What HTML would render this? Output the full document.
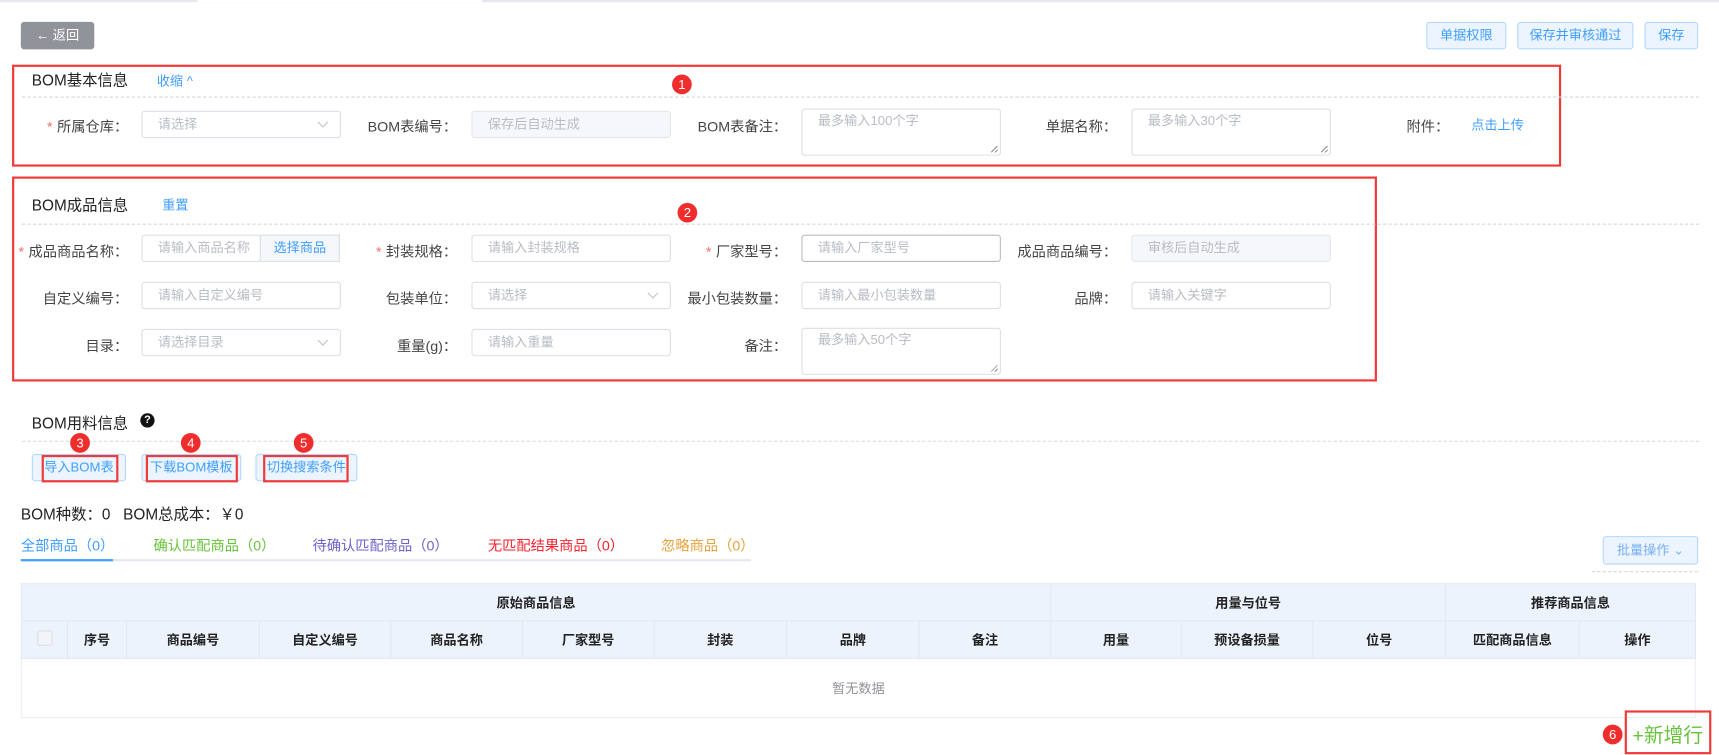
<!DOCTYPE html>
<html><head><meta charset="utf-8">
<style>
html,body{margin:0;padding:0;width:1719px;height:755px;overflow:hidden;background:#fff;}
#w{position:absolute;left:0;top:0;width:1568px;height:689px;transform:scale(1.0963);transform-origin:0 0;font-family:"Liberation Sans","Noto Sans CJK SC",sans-serif;color:#303133;}
.a{position:absolute;}
.btn{position:absolute;box-sizing:border-box;border:1px solid #b3d8ff;background:#ecf5ff;color:#409eff;font-size:12px;border-radius:3px;text-align:center;}
.red{position:absolute;border:2px solid #f03a3a;box-sizing:border-box;}
.dot{position:absolute;width:18px;height:18px;border-radius:50%;background:#f02d2d;color:#fff;font-size:12px;text-align:center;line-height:18px;}
.title{position:absolute;font-size:14px;color:#222;}
.dash{position:absolute;height:0;border-top:1px dashed #d4d7dd;}
.lbl{position:absolute;font-size:13px;color:#444;text-align:right;width:110px;}
.lbl i{color:#f56c6c;font-style:normal;margin-right:4px;}
.in{position:absolute;box-sizing:border-box;border:1px solid #dcdfe6;border-radius:3px;height:25px;width:182px;font-size:12px;color:#b8bcc4;padding-left:14px;line-height:23px;background:#fff;}
.dis{background:#f5f7fa;border-color:#e4e7ed;}
.ta{height:43px;line-height:20px;}
.sel:after{content:"";position:absolute;right:12px;top:6px;width:6px;height:6px;border-right:1px solid #c0c4cc;border-bottom:1px solid #c0c4cc;transform:rotate(45deg);}
.ta:after{content:"";position:absolute;right:2px;bottom:2px;width:6px;height:6px;background:linear-gradient(135deg,transparent 45%,#888 45%,#888 55%,transparent 55%,transparent 75%,#888 75%,#888 85%,transparent 85%);}
table{border-collapse:collapse;position:absolute;left:19px;top:532px;width:1527px;font-size:12px;table-layout:fixed;}
th{background:#ecf3fd;border:1px solid #e2e8f0;font-weight:bold;color:#222;height:33px;padding:0;}
td{border:1px solid #ebeef5;height:53px;padding:0;text-align:center;color:#909399;}
</style></head><body><div id="w">
<div class="a" style="left:0;top:0;width:1568px;height:2px;background:#e4e7ef"></div>
<div class="a" style="left:180px;top:0;width:260px;height:2px;background:#fff"></div>

<div class="a" style="left:19px;top:20px;width:67px;height:25px;background:#909399;border-radius:3px;color:#fff;font-size:12px;line-height:25px;text-align:center">← 返回</div>
<div class="btn" style="left:1301px;top:20px;width:73px;height:25px;line-height:23px">单据权限</div>
<div class="btn" style="left:1384px;top:20px;width:106px;height:25px;line-height:23px">保存并审核通过</div>
<div class="btn" style="left:1500px;top:20px;width:49px;height:25px;line-height:23px">保存</div>

<div class="red" style="left:11px;top:59px;width:1413px;height:93px"></div>
<div class="title" style="left:29px;top:63px">BOM基本信息</div>
<div class="a" style="left:143px;top:65px;font-size:12px;color:#409eff">收缩 ^</div>
<div class="dot" style="left:613px;top:68px">1</div>
<div class="dash" style="left:20px;top:88px;width:1530px"></div>
<div class="lbl" style="left:7px;top:105px"><i>*</i>所属仓库：</div>
<div class="in sel" style="left:129px;top:101px">请选择</div>
<div class="lbl" style="left:307px;top:105px">BOM表编号：</div>
<div class="in dis" style="left:430px;top:101px">保存后自动生成</div>
<div class="lbl" style="left:608px;top:105px">BOM表备注：</div>
<div class="in ta" style="left:731px;top:99px">最多输入100个字</div>
<div class="lbl" style="left:909px;top:105px">单据名称：</div>
<div class="in ta" style="left:1032px;top:99px">最多输入30个字</div>
<div class="lbl" style="left:1212px;top:105px">附件：</div>
<div class="a" style="left:1342px;top:105px;font-size:12px;color:#409eff">点击上传</div>

<div class="red" style="left:11px;top:161px;width:1245px;height:187px"></div>
<div class="title" style="left:29px;top:177px">BOM成品信息</div>
<div class="a" style="left:148px;top:178px;font-size:12px;color:#409eff">重置</div>
<div class="dot" style="left:618px;top:185px">2</div>
<div class="dash" style="left:20px;top:204px;width:1530px"></div>

<div class="lbl" style="left:7px;top:219px"><i>*</i>成品商品名称：</div>
<div class="in" style="left:129px;top:214px;width:109px">请输入商品名称</div>
<div class="a" style="left:237px;top:214px;width:73px;height:25px;box-sizing:border-box;border:1px solid #dcdfe6;background:#f5f7fa;color:#409eff;font-size:12px;text-align:center;line-height:23px">选择商品</div>
<div class="lbl" style="left:307px;top:219px"><i>*</i>封装规格：</div>
<div class="in" style="left:430px;top:214px">请输入封装规格</div>
<div class="lbl" style="left:608px;top:219px"><i>*</i>厂家型号：</div>
<div class="in" style="left:731px;top:214px;border-color:#b8bcc4">请输入厂家型号</div>
<div class="lbl" style="left:909px;top:219px">成品商品编号：</div>
<div class="in dis" style="left:1032px;top:214px">审核后自动生成</div>

<div class="lbl" style="left:7px;top:262px">自定义编号：</div>
<div class="in" style="left:129px;top:257px">请输入自定义编号</div>
<div class="lbl" style="left:307px;top:262px">包装单位：</div>
<div class="in sel" style="left:430px;top:257px">请选择</div>
<div class="lbl" style="left:608px;top:262px">最小包装数量：</div>
<div class="in" style="left:731px;top:257px">请输入最小包装数量</div>
<div class="lbl" style="left:909px;top:262px">品牌：</div>
<div class="in" style="left:1032px;top:257px">请输入关键字</div>

<div class="lbl" style="left:7px;top:305px">目录：</div>
<div class="in sel" style="left:129px;top:300px">请选择目录</div>
<div class="lbl" style="left:307px;top:305px">重量(g)：</div>
<div class="in" style="left:430px;top:300px">请输入重量</div>
<div class="lbl" style="left:608px;top:305px">备注：</div>
<div class="in ta" style="left:731px;top:299px">最多输入50个字</div>

<div class="title" style="left:29px;top:376px">BOM用料信息</div>
<div class="a" style="left:128px;top:377px;width:13px;height:13px;border-radius:50%;background:#111;color:#fff;font-size:10px;font-weight:bold;text-align:center;line-height:13px">?</div>
<div class="dash" style="left:20px;top:402px;width:1530px"></div>
<div class="btn" style="left:29px;top:414px;width:86px;height:25px;line-height:23px">导入BOM表</div>
<div class="btn" style="left:129px;top:414px;width:91px;height:25px;line-height:23px">下载BOM模板</div>
<div class="btn" style="left:233px;top:414px;width:93px;height:25px;line-height:23px">切换搜索条件</div>
<div class="red" style="left:38px;top:415px;width:70px;height:25px"></div>
<div class="red" style="left:133px;top:415px;width:84px;height:25px"></div>
<div class="red" style="left:240px;top:415px;width:78px;height:25px"></div>
<div class="dot" style="left:64px;top:395px">3</div>
<div class="dot" style="left:165px;top:395px">4</div>
<div class="dot" style="left:268px;top:395px">5</div>

<div class="a" style="left:19px;top:459px;font-size:14px;color:#222">BOM种数：0&nbsp;&nbsp; BOM总成本：￥0</div>
<div class="a" style="left:19px;top:487px;font-size:13px;color:#409eff">全部商品（0）</div>
<div class="a" style="left:140px;top:487px;font-size:13px;color:#67c23a">确认匹配商品（0）</div>
<div class="a" style="left:285px;top:487px;font-size:13px;color:#6b63c9">待确认匹配商品（0）</div>
<div class="a" style="left:445px;top:487px;font-size:13px;color:#f5222d">无匹配结果商品（0）</div>
<div class="a" style="left:603px;top:487px;font-size:13px;color:#e6a23c">忽略商品（0）</div>
<div class="a" style="left:19px;top:510px;width:666px;height:2px;background:#e4e7ed"></div>
<div class="a" style="left:19px;top:510px;width:84px;height:2px;background:#409eff"></div>
<div class="btn" style="left:1462px;top:489px;width:87px;height:26px;line-height:24px;color:#79b0f0">批量操作 ⌄</div>
<div class="dash" style="left:1452px;top:521px;width:97px"></div>

<table>
<colgroup><col style="width:42px"><col style="width:54px"><col style="width:121px"><col style="width:120px"><col style="width:120px"><col style="width:120px"><col style="width:121px"><col style="width:121px"><col style="width:120px"><col style="width:119px"><col style="width:120px"><col style="width:121px"><col style="width:122px"><col style="width:106px"></colgroup>
<tr><th colspan="9">原始商品信息</th><th colspan="3">用量与位号</th><th colspan="2">推荐商品信息</th></tr>
<tr><th><span style="display:inline-block;width:12px;height:12px;border:1px solid #dcdfe6;background:#f2f4f7;border-radius:2px"></span></th><th>序号</th><th>商品编号</th><th>自定义编号</th><th>商品名称</th><th>厂家型号</th><th>封装</th><th>品牌</th><th>备注</th><th>用量</th><th>预设备损量</th><th>位号</th><th>匹配商品信息</th><th>操作</th></tr>
<tr><td colspan="14">暂无数据</td></tr>
</table>

<div class="dot" style="left:1462px;top:661px">6</div>
<div class="red" style="left:1482px;top:648px;width:79px;height:40px"></div>
<div class="a" style="left:1489px;top:657px;font-size:18px;color:#67c23a">+新增行</div>
</div></body></html>
